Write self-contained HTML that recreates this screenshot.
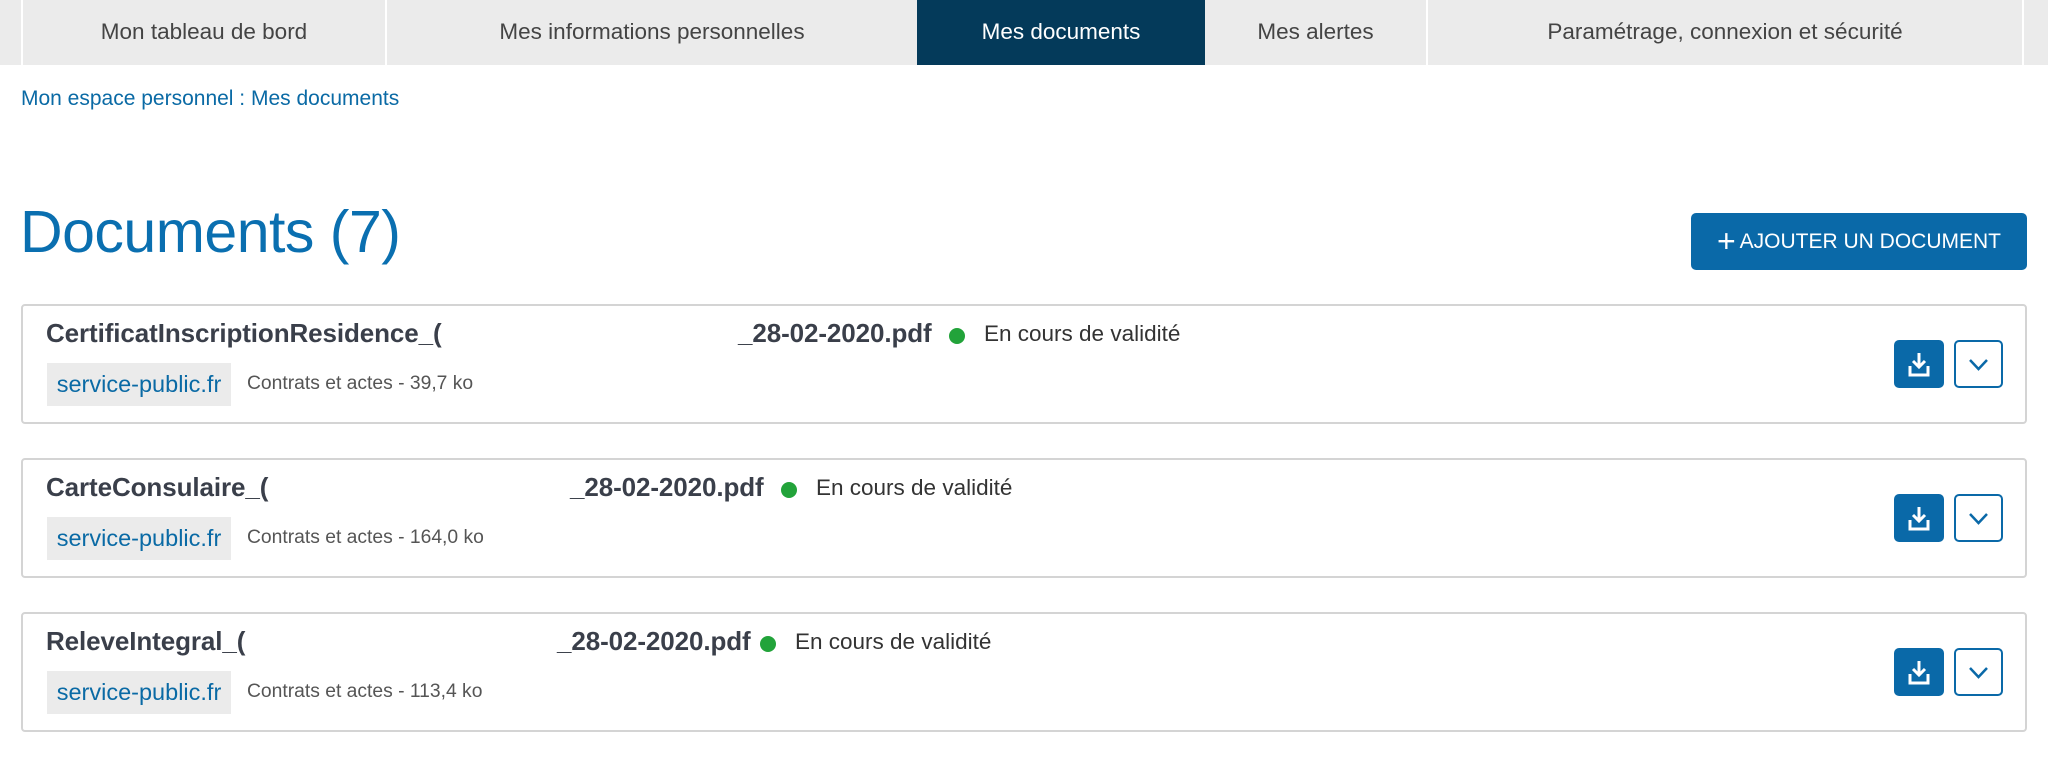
<!DOCTYPE html>
<html><head><meta charset="utf-8"><style>
*{margin:0;padding:0;box-sizing:border-box}
body{width:2048px;height:759px;background:#fff;font-family:"Liberation Sans",Arial,sans-serif;position:relative;overflow:hidden}
.nav{position:absolute;left:0;top:0;width:2048px;height:65px;background:#ebebeb}
.tab{position:absolute;top:0;height:65px;line-height:63px;text-align:center;font-size:22.5px;color:#444;border-left:2px solid #fff;white-space:nowrap}
.tab.act{background:#043a5a;color:#fff;border-left:none}
.bc{position:absolute;left:21px;top:87px;font-size:21px;color:#0a6aa5}
h1{position:absolute;left:20px;top:197px;font-size:59px;font-weight:300;color:#0a6fb0;line-height:70px;letter-spacing:-0.5px}
.btn{position:absolute;left:1691px;top:213px;width:336px;height:57px;background:#0a69a8;border-radius:5px;color:#fff;font-size:21px;line-height:57px;text-align:center}
.btn span{font-size:32px;font-weight:300;vertical-align:-4px;margin-right:4px}
.card{position:absolute;left:21px;width:2006px;height:120px;border:2px solid #d4d4d4;border-radius:4px;background:#fff}
.t{position:absolute;top:12px;font-size:26px;font-weight:bold;color:#3a3f4a;white-space:nowrap;letter-spacing:-0.1px}
.dot{position:absolute;top:22px;width:16px;height:16px;border-radius:50%;background:#22a33a}
.st{position:absolute;top:15px;font-size:22.5px;color:#333;white-space:nowrap}
.tag{position:absolute;left:24px;top:57px;width:184px;height:43px;background:#ebebeb;color:#0a6aa5;font-size:23.5px;line-height:43px;text-align:center}
.meta{position:absolute;left:224px;top:67px;font-size:19.3px;color:#555}
.dl{position:absolute;left:1871px;top:34px;width:50px;height:48px;background:#0a69a8;border-radius:5px}
.ch{position:absolute;left:1931px;top:34px;width:49px;height:48px;border:2px solid #0a69a8;border-radius:5px}
.dl svg,.ch svg{position:absolute;left:0;top:0}
</style></head><body>
<div class="nav">
<div class="tab" style="left:21px;width:364px">Mon tableau de bord</div>
<div class="tab" style="left:385px;width:532px">Mes informations personnelles</div>
<div class="tab act" style="left:917px;width:288px">Mes documents</div>
<div class="tab" style="left:1205px;width:221px;border-left:none">Mes alertes</div>
<div class="tab" style="left:1426px;width:596px">Paramétrage, connexion et sécurité</div>
<div class="tab" style="left:2022px;width:26px"></div>
</div>
<div class="bc">Mon espace personnel : Mes documents</div>
<h1>Documents (7)</h1>
<div class="btn"><span>+</span>AJOUTER UN DOCUMENT</div>

<div class="card" style="top:304px">
<div class="t" style="left:23px">CertificatInscriptionResidence_(</div>
<div class="t" style="left:715px">_28-02-2020.pdf</div>
<div class="dot" style="left:926px"></div>
<div class="st" style="left:961px">En cours de validité</div>
<div class="tag">service-public.fr</div><div class="meta">Contrats et actes - 39,7 ko</div>
<div class="dl"><svg width="50" height="48"><path d="M25 13v14M19 21l6 6 6-6M16 26v9h18v-9" stroke="#fff" stroke-width="3" fill="none"/></svg></div>
<div class="ch"><svg width="45" height="44"><path d="M14 18l8.5 9 8.5-9" stroke="#0a69a8" stroke-width="2.5" fill="none"/></svg></div>
</div>

<div class="card" style="top:458px">
<div class="t" style="left:23px">CarteConsulaire_(</div>
<div class="t" style="left:547px">_28-02-2020.pdf</div>
<div class="dot" style="left:758px"></div>
<div class="st" style="left:793px">En cours de validité</div>
<div class="tag">service-public.fr</div><div class="meta">Contrats et actes - 164,0 ko</div>
<div class="dl"><svg width="50" height="48"><path d="M25 13v14M19 21l6 6 6-6M16 26v9h18v-9" stroke="#fff" stroke-width="3" fill="none"/></svg></div>
<div class="ch"><svg width="45" height="44"><path d="M14 18l8.5 9 8.5-9" stroke="#0a69a8" stroke-width="2.5" fill="none"/></svg></div>
</div>

<div class="card" style="top:612px">
<div class="t" style="left:23px">ReleveIntegral_(</div>
<div class="t" style="left:534px">_28-02-2020.pdf</div>
<div class="dot" style="left:737px"></div>
<div class="st" style="left:772px">En cours de validité</div>
<div class="tag">service-public.fr</div><div class="meta">Contrats et actes - 113,4 ko</div>
<div class="dl"><svg width="50" height="48"><path d="M25 13v14M19 21l6 6 6-6M16 26v9h18v-9" stroke="#fff" stroke-width="3" fill="none"/></svg></div>
<div class="ch"><svg width="45" height="44"><path d="M14 18l8.5 9 8.5-9" stroke="#0a69a8" stroke-width="2.5" fill="none"/></svg></div>
</div>
</body></html>
